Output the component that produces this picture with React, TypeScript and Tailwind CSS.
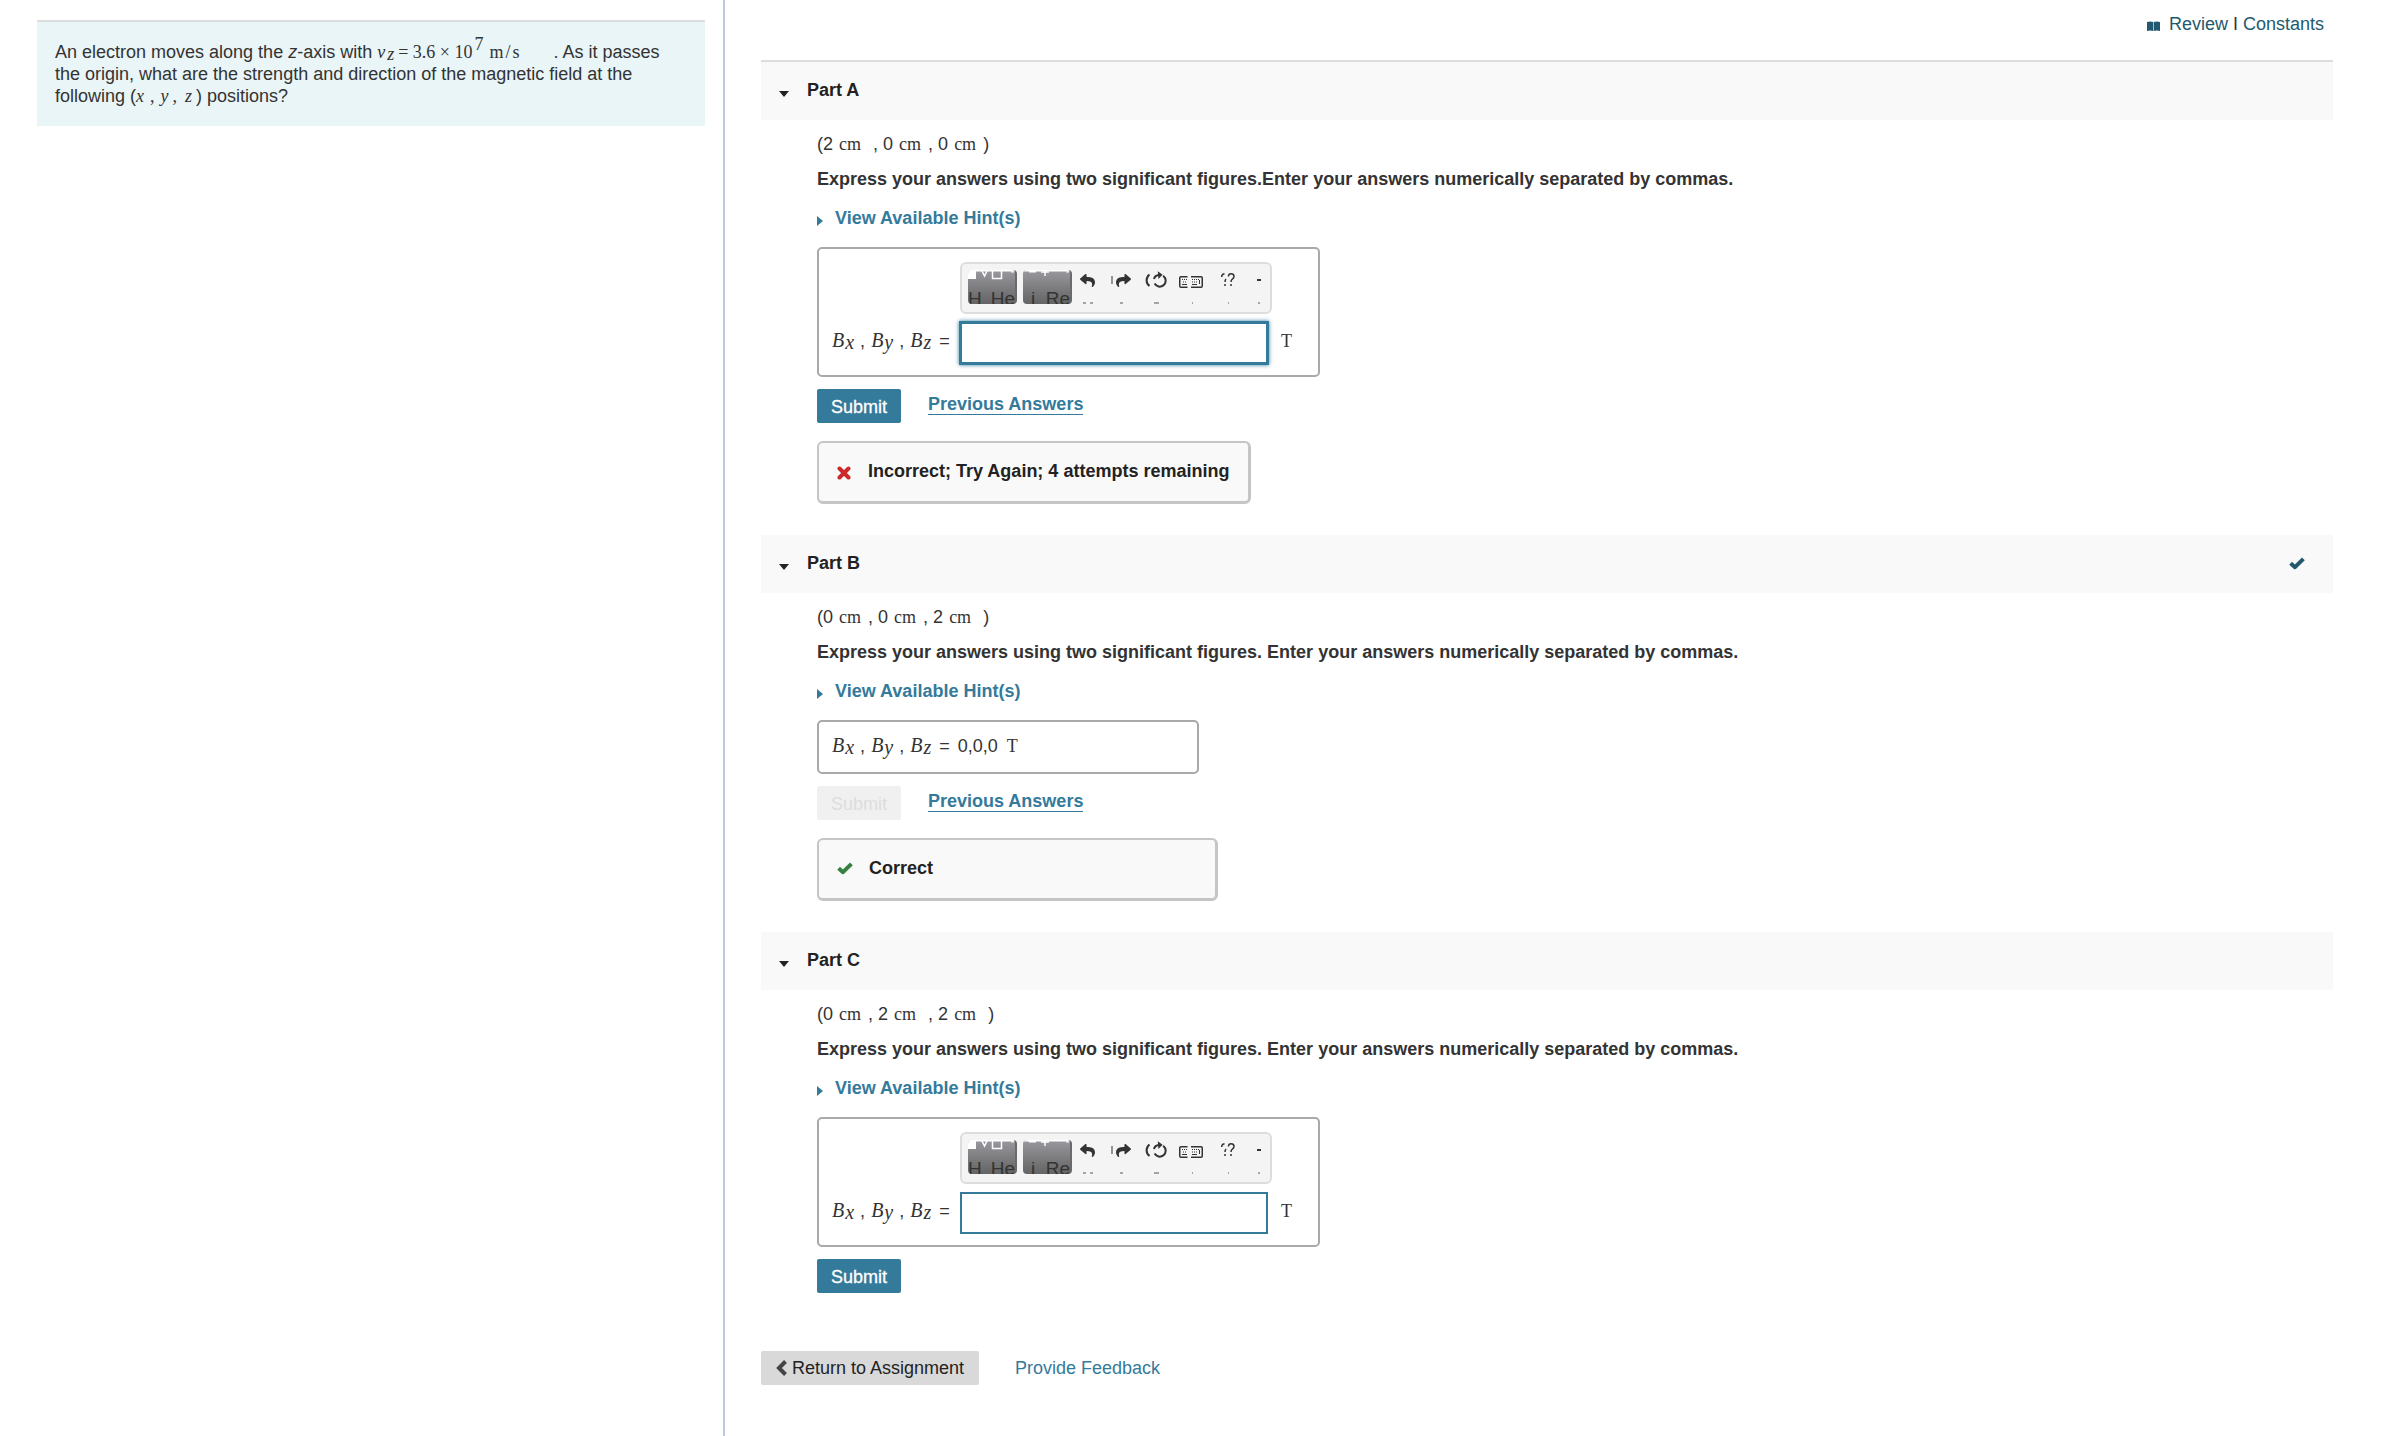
import React, { ReactNode } from 'react';

import clsx from 'clsx';
import { FaReply, FaShare } from 'react-icons/fa';

type Length = {
  value: string;
  wide?: boolean;
};

type PartProps = {
  id: string;
  position: Length[];
  instruction: string;
  solved?: boolean;
  first?: boolean;
  children: ReactNode;
};

type ToolProps = {
  label: string;
  className?: string;
  tick: string;
  children: ReactNode;
};

type TemplateProps = {
  label: string;
  left: string;
  right: string;
  className?: string;
  children: ReactNode;
};

const serif = 'font-["Liberation_Serif",serif]';

const Component = ({ axis }: { axis: string }) => (
  <span className={clsx(serif, 'inline-flex items-baseline gap-px text-[20px] leading-none italic')}>
    <span>B</span>
    <span className="relative top-0.5">{axis}</span>
  </span>
);

const FieldLabel = () => (
  <span className="inline-flex items-baseline leading-[22px]">
    <Component axis="x" />
    <span className="px-1.5">,</span>
    <Component axis="y" />
    <span className="px-1.5">,</span>
    <Component axis="z" />
    <span className="ml-2">=</span>
  </span>
);

const Position = ({ items }: { items: Length[] }) => (
  <p className="whitespace-pre">
    (
    {items.map(({ value, wide }, i) => (
      <React.Fragment key={i}>
        {i > 0 && ', '}
        {value} <span className={clsx(serif, 'ml-px leading-none', wide ? 'mr-3' : 'mr-[7px]')}>cm</span>
      </React.Fragment>
    ))}
    )
  </p>
);

const CheckIcon = ({ className }: { className?: string }) => (
  <svg width="16" height="13" viewBox="0 0 16 13" fill="none" stroke="currentColor" strokeWidth="4" strokeLinejoin="round" className={className}>
    <path d="M1.6 6.2L6 10.2L14.4 1.8" />
  </svg>
);

const CrossIcon = ({ className }: { className?: string }) => (
  <svg width="14" height="14" viewBox="0 0 14 14" stroke="currentColor" strokeWidth="4" strokeLinecap="round" className={className}>
    <path d="M2.5 2.5L11.5 11.5M11.5 2.5L2.5 11.5" />
  </svg>
);

const ResetIcon = () => (
  <svg width="22" height="18" viewBox="0 0 22 18" fill="none" stroke="#333" strokeWidth="2">
    <path d="M4.5 3.5C.6 6.5.6 12 4.5 15" />
    <path d="M9 8C9.6 5.6 11.4 4.2 14 4" />
    <path d="M18.2 4.8C21.6 7.6 21.4 12.2 18.4 14.4C15.4 16.6 11.4 15.8 9.6 12.6" />
    <path d="M12.8.2L17.6 3.8L13.4 8Z" fill="#333" stroke="none" />
  </svg>
);

const KeyboardIcon = () => (
  <svg width="24" height="12" viewBox="0 0 24 12" fill="none" stroke="#333">
    <path d="M8.5.75H2Q.75.75.75 2V10Q.75 11.25 2 11.25H8.5" strokeWidth="1.5" />
    <path d="M12 .75H22Q23.25.75 23.25 2V10Q23.25 11.25 22 11.25H12" strokeWidth="1.5" />
    <path d="M3 3.5H8M13 3.5H21" strokeDasharray="1 1" />
    <path d="M4 6H8M13 6H19" strokeDasharray="1 1" />
    <path d="M3 8.5H8M13 8.5H18M20.5 4V8" />
  </svg>
);

const HelpIcon = () => (
  <svg width="14" height="14" viewBox="0 0 14 14" fill="none" stroke="#333" strokeWidth="1.5">
    <path d="M.6 4Q.6 1.2 3.5.8M5 6Q4 7 4 9M4 11V13" />
    <path d="M7.4 3.5Q7.6.8 10 .8Q13 .8 13 3.5Q13 5 11.4 6Q10 7 10 9M10 11V13" />
  </svg>
);

const TemplateButton = ({ label, left, right, className, children }: TemplateProps) => (
  <button
    type="button"
    aria-label={label}
    className={clsx(
      'relative flex h-[34px] w-[49px] items-end justify-between overflow-hidden rounded-[4px] border-r-2 border-[#6a6a6a] bg-linear-to-b from-[#9a999f] to-[#646464] text-[19px] leading-[19px] text-[#333]',
      className,
    )}
  >
    <svg className="absolute top-0 left-0" width="47" height="12" viewBox="0 0 47 12" fill="none" stroke="#fff">
      {children}
    </svg>
    <span className="translate-y-1">{left}</span>
    <span className="translate-y-1">{right}</span>
  </button>
);

const ToolButton = ({ label, className, tick, children }: ToolProps) => (
  <button
    type="button"
    aria-label={label}
    className={clsx('flex h-[34px] flex-col items-center justify-between text-[#333]', className)}
  >
    <span className="flex h-5 items-center">{children}</span>
    <svg width="12" height="2" viewBox="0 0 12 2" stroke="#555">
      <path d={tick} />
    </svg>
  </button>
);

const Toolbar = () => (
  <div className="flex h-[52px] w-[312px] items-start rounded-[6px] border-2 border-[#ddd] bg-[#f4f4f4] pt-1.5 pl-1.5">
    <div className="flex gap-1.5">
      <TemplateButton label="Templates" left="H" right="He">
        <path d="M0 .5H47" strokeWidth="2" />
        <path d="M0 0H8V9H0Z" fill="#fff" stroke="none" />
        <path d="M14 1L16.5 6L19 1" strokeWidth="1.5" />
        <path d="M24.5 0V8.5H33.5V0" strokeWidth="1.5" />
        <path d="M43 2H46" />
      </TemplateButton>
      <TemplateButton label="Symbols" left="i" right="Re" className="pl-2">
        <path d="M0 .5H47" strokeWidth="2" />
        <path d="M6 1.5H13" strokeWidth="2" />
        <path d="M18 2H26M22 0V6" strokeWidth="1.5" />
        <path d="M43 2H46" />
      </TemplateButton>
    </div>
    <ToolButton label="undo" className="ml-2" tick="M1 1H4M8 1H11">
      <FaReply size={15} />
    </ToolButton>
    <ToolButton label="redo" className="ml-4" tick="M5 1H8">
      <span className="flex items-center gap-[3px]">
        <svg width="2" height="10" viewBox="0 0 2 10" stroke="#333">
          <path d="M1 1V9" />
        </svg>
        <FaShare size={15} />
      </span>
    </ToolButton>
    <ToolButton label="reset" className="ml-3.5" tick="M4 1H9">
      <ResetIcon />
    </ToolButton>
    <ToolButton label="keyboard shortcuts" className="ml-3" tick="M7 1H8">
      <span className="pt-1">
        <KeyboardIcon />
      </span>
    </ToolButton>
    <ToolButton label="help" className="ml-[18px]" tick="M6 1H7">
      <HelpIcon />
    </ToolButton>
    <ToolButton label="more" className="ml-[18px]" tick="M5 1H7">
      <svg width="4" height="2" viewBox="0 0 4 2" fill="#333">
        <path d="M0 0H4V2H0Z" />
      </svg>
    </ToolButton>
  </div>
);

const AnswerEditor = ({ id, active }: { id: string; active?: boolean }) => (
  <div className="mt-[18px] grid h-[130px] w-[503px] grid-cols-[128px_308px_auto] content-start gap-y-2 rounded-[5px] border-2 border-[#a9a9a9] pt-[13px] pl-[13px]">
    <div className="col-start-2">
      <Toolbar />
    </div>
    <label htmlFor={id} className="col-start-1 self-center pb-1">
      <FieldLabel />
    </label>
    <input
      id={id}
      type="text"
      className={clsx(
        'h-[42px] w-full border-2 border-[#347a9b] px-2 outline-none',
        active && 'shadow-[0_0_0_1px_#347a9b,0_0_4px_1px_#347a9b]',
      )}
    />
    <span className={clsx(serif, 'self-center pb-1 pl-[13px]')}>T</span>
  </div>
);

const Actions = ({ disabled, previous }: { disabled?: boolean; previous?: boolean }) => (
  <div className="mt-3 flex h-[34px]">
    <button
      type="button"
      disabled={disabled}
      className={clsx(
        'w-[84px] rounded-[2px] pt-px',
        disabled ? 'bg-[#f0f0f0] text-[#ddd]' : 'bg-[#347a9b] text-white [-webkit-text-stroke:0.3px_white]',
      )}
    >
      Submit
    </button>
    {previous && (
      <a
        href="#previous"
        className="mt-1.5 ml-[27px] self-start border-b border-[#347a9b] leading-[19px] font-bold text-[#347a9b]"
      >
        Previous Answers
      </a>
    )}
  </div>
);

const Feedback = ({ icon, className, children }: { icon: ReactNode; className: string; children: ReactNode }) => (
  <div
    className={clsx(
      'mt-[18px] flex h-[63px] items-center rounded-[6px] border-2 border-r-3 border-b-3 border-[#c5c5c5] bg-[#f9f9f9] pb-0.5 pl-[18px] font-bold text-[#222]',
      className,
    )}
  >
    {icon}
    {children}
  </div>
);

const Part = ({ id, position, instruction, solved, first, children }: PartProps) => (
  <section className={clsx(!first && 'mt-[31px]')}>
    <h2 className={clsx('bg-[#f9f9f9] font-bold text-[#222]', first && 'border-t-2 border-[#ddd]')}>
      <button type="button" className="flex h-[58px] w-full items-center pr-7 pb-0.5 pl-[18px] text-left">
        <svg width="10" height="6" viewBox="0 0 10 6" fill="#222" className="mt-2 mr-[18px]">
          <path d="M0 0H10L5 6Z" />
        </svg>
        Part {id}
        {solved && <CheckIcon className="ml-auto text-[#22596f]" />}
      </button>
    </h2>
    <div className="pt-[13px] pl-14">
      <Position items={position} />
      <p className="mt-[13px] font-bold">{instruction}</p>
      <button type="button" className="mt-[17px] flex items-center leading-[22px] font-bold text-[#347a9b]">
        <svg width="6" height="10" viewBox="0 0 6 10" fill="#347a9b" className="mt-1.5 mr-3">
          <path d="M0 0L6 5L0 10Z" />
        </svg>
        View Available Hint(s)
      </button>
      {children}
    </div>
  </section>
);

const Problem = () => (
  <aside className="border-r-2 border-[#bcc9dd] pt-5 pr-[18px] pl-[37px]">
    <p className="border-t-2 border-[#ddd] bg-[#eaf5f7] py-[19px] pr-10 pl-[18px]">
      An electron moves along the <i>z</i>-axis with{' '}
      <span className={clsx(serif, 'mr-[29px] leading-none whitespace-nowrap')}>
        <i>v</i>
        <i className="relative top-0.5 mr-1 ml-0.5">z</i>= 3.6 × 10
        <span className="relative -top-2 mr-1 ml-0.5 leading-none">7</span>
        <span className="ml-0.5">m</span>
        <span className="ml-0.5">/</span>
        <span className="ml-0.5">s</span>
      </span>{' '}
      . As it passes the origin, what are the strength and direction of the magnetic field at the following (
      <span className={clsx(serif, 'leading-none')}>
        <i>x</i>
        <span className="mx-1.5">,</span>
        <i>y</i>
        <span className="mr-2 ml-1">,</span>
        <i className="mr-1">z</i>
      </span>
      ) positions?
    </p>
  </aside>
);

const App = () => (
  <div className='grid min-h-screen grid-cols-[725px_1fr] bg-white font-["Liberation_Sans",Arial,sans-serif] text-[18px] leading-[22px] text-[#333]'>
    <Problem />
    <main className="pt-[13px] pr-[61px] pl-9">
      <nav className="mb-[25px] flex items-center justify-end gap-[5px] pr-[9px] text-[#22596f]">
        <svg width="13" height="10" viewBox="0 0 13 10" fill="#22596f" className="mt-1 mr-1">
          <path d="M0 1Q3 0 6.2 1V10Q3 9 0 10ZM6.8 1Q10 0 13 1V10Q10 9 6.8 10Z" />
        </svg>
        <a href="#review">Review</a>
        <span className="text-[#333]">I</span>
        <a href="#constants">Constants</a>
      </nav>

      <Part
        id="A"
        first
        position={[{ value: '2', wide: true }, { value: '0' }, { value: '0' }]}
        instruction="Express your answers using two significant figures.Enter your answers numerically separated by commas."
      >
        <AnswerEditor id="answer-a" active />
        <Actions previous />
        <Feedback className="w-[434px]" icon={<CrossIcon className="mt-1 mr-[17px] text-[#cc2a2a]" />}>
          Incorrect; Try Again; 4 attempts remaining
        </Feedback>
      </Part>

      <Part
        id="B"
        solved
        position={[{ value: '0' }, { value: '0' }, { value: '2', wide: true }]}
        instruction="Express your answers using two significant figures. Enter your answers numerically separated by commas."
      >
        <div className="mt-[18px] flex h-[54px] w-[382px] items-baseline rounded-[5px] border-2 border-[#a9a9a9] pt-[13px] pl-[13px]">
          <FieldLabel />
          <span className="ml-2">0,0,0</span>
          <span className={clsx(serif, 'ml-[9px]')}>T</span>
        </div>
        <Actions disabled previous />
        <Feedback className="w-[401px]" icon={<CheckIcon className="mr-4 text-[#38803f]" />}>
          Correct
        </Feedback>
      </Part>

      <Part
        id="C"
        position={[{ value: '0' }, { value: '2', wide: true }, { value: '2', wide: true }]}
        instruction="Express your answers using two significant figures. Enter your answers numerically separated by commas."
      >
        <AnswerEditor id="answer-c" />
        <Actions />
      </Part>

      <footer className="mt-[58px] flex items-center pb-12">
        <button
          type="button"
          className="flex h-[34px] w-[218px] items-center justify-center gap-[5px] rounded-[2px] bg-[#d9d9d9] text-[#222]"
        >
          <svg width="11" height="16" viewBox="0 0 11 16" fill="none" stroke="#444" strokeWidth="4">
            <path d="M9.5 1.5L3 8L9.500 14.5" />
          </svg>
          Return to Assignment
        </button>
        <a href="#feedback" className="ml-9 text-[#347a9b]">
          Provide Feedback
        </a>
      </footer>
    </main>
  </div>
);

export default App;
